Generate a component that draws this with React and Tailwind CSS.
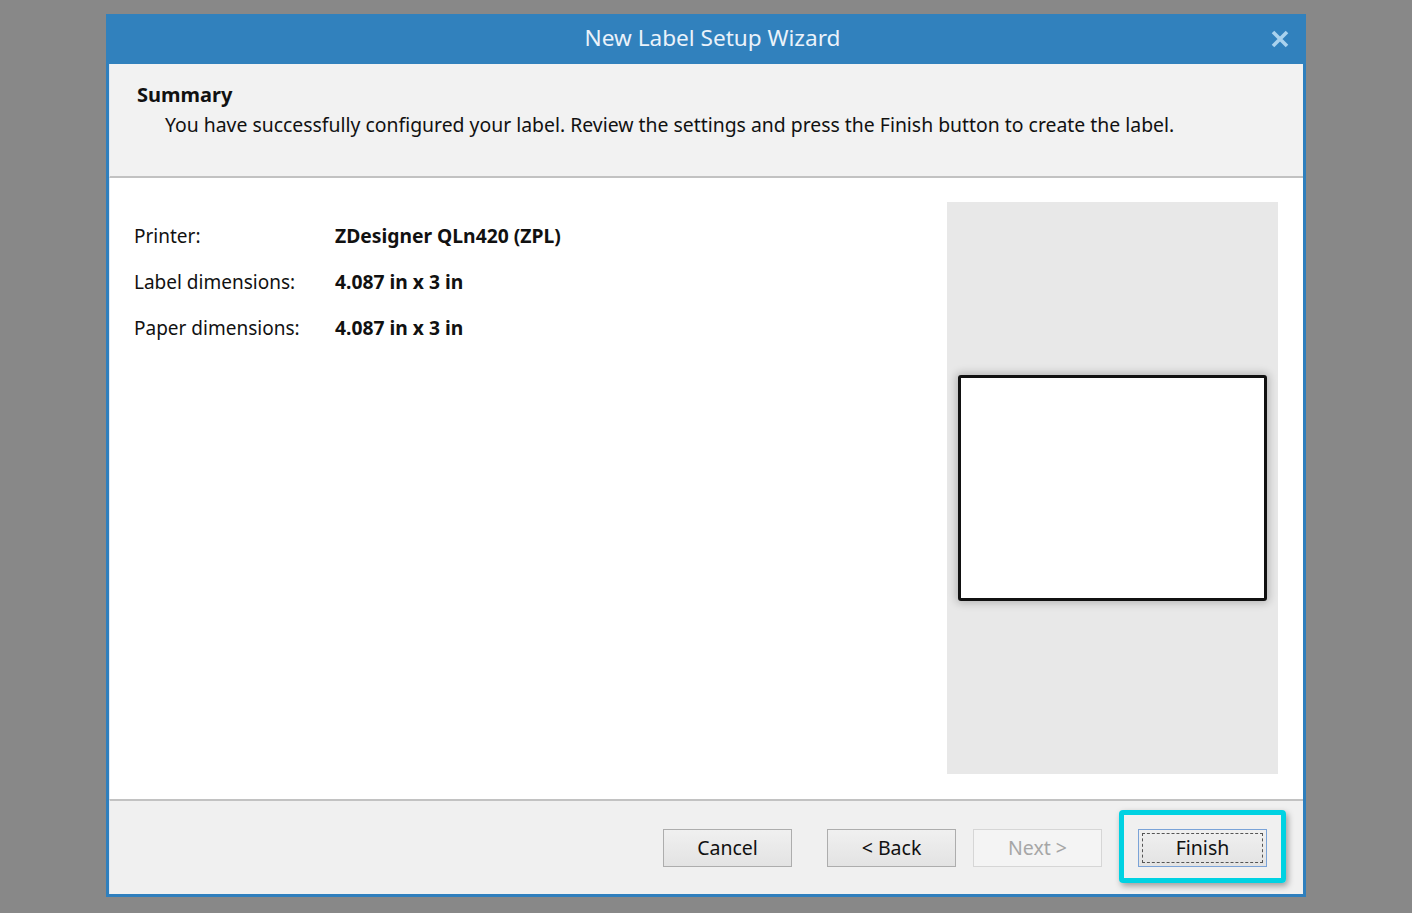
import React from "react";

const font = { fontFamily: '"Noto Sans", "Open Sans", sans-serif' };

function Btn({ children, disabled, focused }) {
  return (
    <div
      className={
        "relative flex h-[38px] w-[129px] items-center justify-center border text-[19.5px] " +
        (disabled
          ? "border-[#d6d6d6] bg-[#f4f4f4] text-[#a6a6a6]"
          : focused
          ? "border-[#7aa3d8] bg-gradient-to-b from-[#f0f0f0] to-[#e3e3e3] text-[#111]"
          : "border-[#adadad] bg-gradient-to-b from-[#f0f0f0] to-[#e3e3e3] text-[#111]")
      }
    >
      {focused && (
        <div className="absolute inset-[3px] border border-dashed border-[#555]" />
      )}
      <span className="relative">{children}</span>
    </div>
  );
}

export default function App() {
  return (
    <div className="h-[913px] w-[1412px] overflow-hidden bg-[#888888] pl-[106px] pt-[14px]" style={font}>
      <div className="flex h-[883px] w-[1200px] flex-col border-x-[3px] border-b-[3px] border-[#2f7fbd] bg-[#f0f0f0]">
        {/* title bar */}
        <div className="relative -mx-[3px] flex h-[50px] shrink-0 items-center justify-center bg-[#3181bd] pb-[3px] pl-[13px]">
          <span className="text-[22.6px] text-[#eaf2fa]">New Label Setup Wizard</span>
          <svg className="absolute right-[16px] top-[15px]" width="20" height="20" viewBox="0 0 20 20">
            <path d="M3 3 L17 17 M17 3 L3 17" stroke="#a9d2ee" strokeWidth="3.6" strokeLinecap="butt" />
          </svg>
        </div>
        {/* header */}
        <div className="flex h-[114px] shrink-0 flex-col border-b-2 border-l border-[#c2c2c2] border-l-[#dfe9f3] bg-[#f2f2f2] pl-[27px] pt-[16px] text-[#111]">
          <div className="text-[20px] font-bold leading-[30px]">Summary</div>
          <div className="pl-[28px] text-[19.4px] leading-[30px]">
            You have successfully configured your label. Review the settings and press the Finish button to create the label.
          </div>
        </div>
        {/* content */}
        <div className="flex h-[621px] shrink-0 border-l border-l-[#dfe9f3] bg-white py-[24px] pl-[24px] pr-[25px]">
          <div className="flex flex-1 flex-col gap-[18px] pt-[20px] text-[19px] text-[#111]">
            <div className="flex h-[28px] items-center">
              <span className="w-[201px]">Printer:</span>
              <span className="text-[19.3px] font-bold">ZDesigner QLn420 (ZPL)</span>
            </div>
            <div className="flex h-[28px] items-center">
              <span className="w-[201px]">Label dimensions:</span>
              <span className="text-[19.3px] font-bold">4.087 in x 3 in</span>
            </div>
            <div className="flex h-[28px] items-center">
              <span className="w-[201px]">Paper dimensions:</span>
              <span className="text-[19.3px] font-bold">4.087 in x 3 in</span>
            </div>
          </div>
          <div className="flex h-[572px] w-[331px] items-center justify-center bg-[#e8e8e8]">
            <div className="h-[226px] w-[309px] rounded-[3px] border-[3px] border-[#111] bg-white shadow-[0_0_8px_2px_rgba(0,0,0,0.22)]" />
          </div>
        </div>
        {/* footer */}
        <div className="flex flex-1 items-center justify-end border-l border-t-2 border-[#c2c2c2] border-l-[#dfe9f3] bg-[#f0f0f0] pr-[36px]">
          <Btn>Cancel</Btn>
          <div className="w-[35px]" />
          <Btn>&lt; Back</Btn>
          <div className="w-[17px]" />
          <Btn disabled>Next &gt;</Btn>
          <div className="w-[36px]" />
          <div className="relative">
            <div className="pointer-events-none absolute -bottom-[16px] -left-[19px] -right-[19px] -top-[19px] rounded-[4px] border-[5px] border-[#00d2e2] shadow-[2px_3px_6px_rgba(0,0,0,0.35)]" />
            <Btn focused>Finish</Btn>
          </div>
        </div>
      </div>
    </div>
  );
}
